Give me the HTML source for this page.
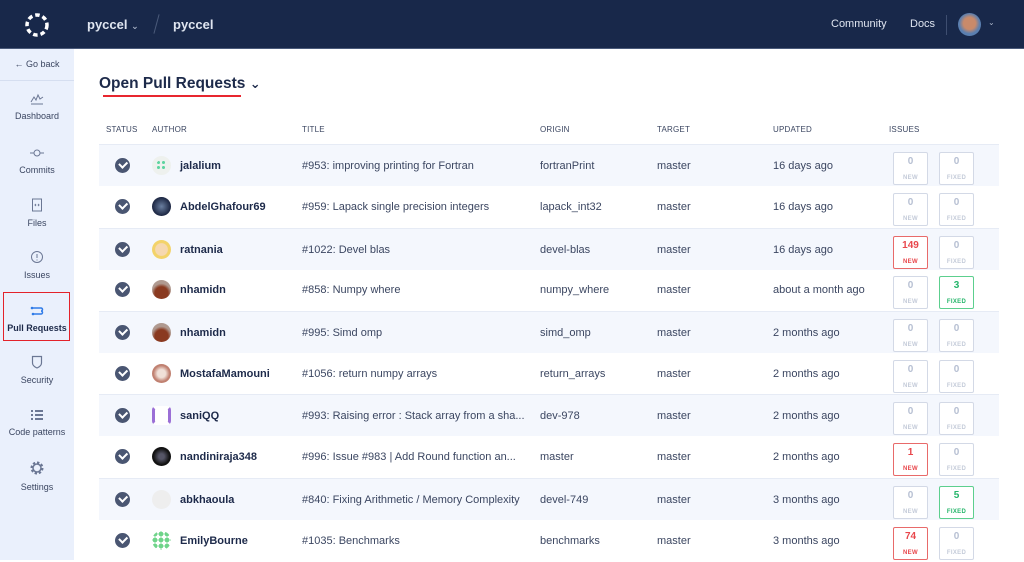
<!DOCTYPE html>
<html><head><meta charset="utf-8"><style>
*{box-sizing:border-box;margin:0;padding:0}
body{width:1024px;height:560px;overflow:hidden;background:#fff;font-family:"Liberation Sans","DejaVu Sans",sans-serif;color:#2b3550;position:relative}
.top{position:absolute;left:0;top:0;width:1024px;height:49px;background:#18284a;border-bottom:1px solid #4a5a7a;color:#dfe5f0}
.top .t{position:absolute;top:17px;font-size:13px;font-weight:bold}
.side{position:absolute;left:0;top:49px;width:74px;height:511px;background:#eaf0fc}
.side .it{position:absolute;left:0;width:74px;text-align:center;font-size:9px;color:#3b4661}
.side svg{display:block;margin:0 auto 6px}
h1{position:absolute;left:99px;top:75px;font-size:15.5px;font-weight:bold;color:#1d2a4a}
.ul{position:absolute;left:103px;top:95px;width:138px;height:2px;background:#e8262f}
.hd{position:absolute;top:125px;font-size:8px;color:#3b4661;letter-spacing:.2px}
.row{position:absolute;left:99px;width:900px;height:42px;font-size:11px;color:#3b4661}
.row.a{background:#f4f7fd;border-top:1px solid #e6ebf5}
.row>*{position:absolute}
.chk{left:16px;top:13px;width:15px;height:15px;border-radius:50%;background:#4a5672}
.chk:after{content:"";position:absolute;left:4px;top:3px;width:6px;height:3.5px;border-left:2px solid #fff;border-bottom:2px solid #fff;transform:rotate(-45deg)}
.av{left:53px;top:11px;width:19px;height:19px;border-radius:50%}
.nm{left:81px;top:15px;font-weight:bold;color:#1d2a4a}
.c{top:15px}
.bx{top:7px;width:35px;height:33px;border:1px solid #d3d9e6;border-radius:2px;text-align:center;background:#fff}
.bx b{display:block;font-size:10px;margin-top:3px;color:#b6bfd2}
.bx i{display:block;font-style:normal;font-size:6px;font-weight:bold;margin-top:8px;color:#c4cbd9;letter-spacing:.3px}
.bx.r{border-color:#e86a6a}.bx.r b,.bx.r i{color:#e8474c}
.bx.g{border-color:#5ccf8e}.bx.g b,.bx.g i{color:#24b56a}
</style></head><body>
<div class="top">
<svg style="position:absolute;left:24px;top:12px" width="26" height="26" viewBox="0 0 26 26"><circle cx="13" cy="13" r="10" fill="none" stroke="#fff" stroke-width="3.5" stroke-dasharray="4.5 3"/></svg>
<span class="t" style="left:87px">pyccel <span style="font-size:9px;color:#aab4c8">&#8964;</span></span>
<span style="position:absolute;left:156px;top:14px;width:1px;height:20px;background:#4a5a7a;transform:rotate(15deg)"></span>
<span class="t" style="left:173px">pyccel</span>
<span class="t" style="left:831px;font-weight:normal;font-size:11px;top:18px">Community</span>
<span class="t" style="left:910px;font-weight:normal;font-size:11px;top:18px">Docs</span>
<span style="position:absolute;left:946px;top:15px;width:1px;height:20px;background:#3e4e70"></span>
<span style="position:absolute;left:958px;top:13px;width:23px;height:23px;border-radius:50%;background:radial-gradient(circle at 50% 45%,#c98a6a 35%,#5a7fb0 60%)"></span>
<span style="position:absolute;left:988px;top:18px;font-size:8px;color:#aab4c8">&#8964;</span>
</div>
<div class="side">
<div class="it" style="top:10px">&#8592; Go back</div>
<div style="position:absolute;left:0;top:31px;width:74px;height:1px;background:#d5def0"></div>
<div class="it" style="top:44px"><svg width="14" height="12" viewBox="0 0 14 12"><path d="M1 9L4 4 6 7 8 2 10 6 13 4M1 11H13" fill="none" stroke="#6b7794" stroke-width="1"/></svg>Dashboard</div>
<div class="it" style="top:98px"><svg width="16" height="12" viewBox="0 0 16 12"><circle cx="8" cy="6" r="3" fill="none" stroke="#6b7794"/><path d="M1 6H5M11 6H15" stroke="#6b7794"/></svg>Commits</div>
<div class="it" style="top:149px"><svg width="12" height="14" viewBox="0 0 12 14"><rect x="1.5" y="1" width="9" height="12" fill="none" stroke="#6b7794"/><path d="M5 6L4 7 5 8M7 6L8 7 7 8" stroke="#6b7794" fill="none"/></svg>Files</div>
<div class="it" style="top:201px"><svg width="14" height="14" viewBox="0 0 14 14"><circle cx="7" cy="7" r="5.5" fill="none" stroke="#6b7794"/><path d="M7 4V8M7 9.5V10.5" stroke="#6b7794"/></svg>Issues</div>
<div style="position:absolute;left:3px;top:243px;width:67px;height:49px;border:1.5px solid #e3222a"></div>
<div class="it" style="top:256px;font-weight:bold;color:#1d2a4a"><svg width="14" height="12" viewBox="0 0 14 12"><path d="M2 3H11A1.5 1.5 0 0 1 11 6M3 9H11A1.5 1.5 0 0 0 11 6" fill="none" stroke="#2f7be8" stroke-width="1.5"/><circle cx="2" cy="3" r="1.3" fill="#2f7be8"/><circle cx="3" cy="9" r="1.3" fill="#2f7be8"/></svg>Pull Requests</div>
<div class="it" style="top:306px"><svg width="12" height="14" viewBox="0 0 12 14"><path d="M1.5 1.5H10.5V8Q10.5 11 6 13Q1.5 11 1.5 8Z" fill="none" stroke="#6b7794" stroke-width="1.2"/></svg>Security</div>
<div class="it" style="top:360px"><svg width="14" height="12" viewBox="0 0 14 12"><path d="M1 2H3M5 2H13M1 6H3M5 6H13M1 10H3M5 10H13" stroke="#6b7794" stroke-width="2"/></svg>Code patterns</div>
<div class="it" style="top:411px"><svg width="16" height="16" viewBox="0 0 16 16"><circle cx="8" cy="8" r="5" fill="none" stroke="#6b7794" stroke-width="3" stroke-dasharray="2.2 1.7"/><circle cx="8" cy="8" r="4" fill="none" stroke="#6b7794" stroke-width="1.5"/></svg>Settings</div>
</div>
<h1>Open Pull Requests <span style="font-size:13px">&#8964;</span></h1>
<div class="ul"></div>
<div class="hd" style="left:106px">STATUS</div><div class="hd" style="left:152px">AUTHOR</div><div class="hd" style="left:302px">TITLE</div><div class="hd" style="left:540px">ORIGIN</div><div class="hd" style="left:657px">TARGET</div><div class="hd" style="left:773px">UPDATED</div><div class="hd" style="left:889px">ISSUES</div>

<div class="row a" style="top:144px"><span class="chk"></span><span class="av" style="background:#eef1ee;border:4px solid #eef1ee;background-image:radial-gradient(circle,#5ed4a0 40%,transparent 45%);background-size:5px 5px"></span><span class="nm">jalalium</span><span class="c" style="left:203px">#953: improving printing for Fortran</span><span class="c" style="left:441px">fortranPrint</span><span class="c" style="left:558px">master</span><span class="c" style="left:674px">16 days ago</span><span class="bx" style="left:794px"><b>0</b><i>NEW</i></span><span class="bx" style="left:840px"><b>0</b><i>FIXED</i></span></div>
<div class="row" style="top:186px"><span class="chk"></span><span class="av" style="background:radial-gradient(circle,#6a7fa0,#1a2440 70%)"></span><span class="nm">AbdelGhafour69</span><span class="c" style="left:203px">#959: Lapack single precision integers</span><span class="c" style="left:441px">lapack_int32</span><span class="c" style="left:558px">master</span><span class="c" style="left:674px">16 days ago</span><span class="bx" style="left:794px"><b>0</b><i>NEW</i></span><span class="bx" style="left:840px"><b>0</b><i>FIXED</i></span></div>
<div class="row a" style="top:228px"><span class="chk"></span><span class="av" style="background:radial-gradient(circle,#f6d8b0 45%,#f3d36a 50%)"></span><span class="nm">ratnania</span><span class="c" style="left:203px">#1022: Devel blas</span><span class="c" style="left:441px">devel-blas</span><span class="c" style="left:558px">master</span><span class="c" style="left:674px">16 days ago</span><span class="bx r" style="left:794px"><b>149</b><i>NEW</i></span><span class="bx" style="left:840px"><b>0</b><i>FIXED</i></span></div>
<div class="row" style="top:269px"><span class="chk"></span><span class="av" style="background:radial-gradient(circle at 50% 70%,#8a3a20 40%,#b09a90 60%)"></span><span class="nm">nhamidn</span><span class="c" style="left:203px">#858: Numpy where</span><span class="c" style="left:441px">numpy_where</span><span class="c" style="left:558px">master</span><span class="c" style="left:674px">about a month ago</span><span class="bx" style="left:794px"><b>0</b><i>NEW</i></span><span class="bx g" style="left:840px"><b>3</b><i>FIXED</i></span></div>
<div class="row a" style="top:311px"><span class="chk"></span><span class="av" style="background:radial-gradient(circle at 50% 70%,#8a3a20 40%,#b09a90 60%)"></span><span class="nm">nhamidn</span><span class="c" style="left:203px">#995: Simd omp</span><span class="c" style="left:441px">simd_omp</span><span class="c" style="left:558px">master</span><span class="c" style="left:674px">2 months ago</span><span class="bx" style="left:794px"><b>0</b><i>NEW</i></span><span class="bx" style="left:840px"><b>0</b><i>FIXED</i></span></div>
<div class="row" style="top:353px"><span class="chk"></span><span class="av" style="background:radial-gradient(circle,#f0e0d8 30%,#c08070 60%)"></span><span class="nm">MostafaMamouni</span><span class="c" style="left:203px">#1056: return numpy arrays</span><span class="c" style="left:441px">return_arrays</span><span class="c" style="left:558px">master</span><span class="c" style="left:674px">2 months ago</span><span class="bx" style="left:794px"><b>0</b><i>NEW</i></span><span class="bx" style="left:840px"><b>0</b><i>FIXED</i></span></div>
<div class="row a" style="top:394px"><span class="chk"></span><span class="av" style="background:#fff;border:3px solid #9b6fd6;border-top-color:transparent;border-bottom-color:transparent;border-radius:4px"></span><span class="nm">saniQQ</span><span class="c" style="left:203px">#993: Raising error : Stack array from a sha...</span><span class="c" style="left:441px">dev-978</span><span class="c" style="left:558px">master</span><span class="c" style="left:674px">2 months ago</span><span class="bx" style="left:794px"><b>0</b><i>NEW</i></span><span class="bx" style="left:840px"><b>0</b><i>FIXED</i></span></div>
<div class="row" style="top:436px"><span class="chk"></span><span class="av" style="background:radial-gradient(circle,#556 20%,#111 60%)"></span><span class="nm">nandiniraja348</span><span class="c" style="left:203px">#996: Issue #983 | Add Round function an...</span><span class="c" style="left:441px">master</span><span class="c" style="left:558px">master</span><span class="c" style="left:674px">2 months ago</span><span class="bx r" style="left:794px"><b>1</b><i>NEW</i></span><span class="bx" style="left:840px"><b>0</b><i>FIXED</i></span></div>
<div class="row a" style="top:478px"><span class="chk"></span><span class="av" style="background:#eee"></span><span class="nm">abkhaoula</span><span class="c" style="left:203px">#840: Fixing Arithmetic / Memory Complexity</span><span class="c" style="left:441px">devel-749</span><span class="c" style="left:558px">master</span><span class="c" style="left:674px">3 months ago</span><span class="bx" style="left:794px"><b>0</b><i>NEW</i></span><span class="bx g" style="left:840px"><b>5</b><i>FIXED</i></span></div>
<div class="row" style="top:520px"><span class="chk"></span><span class="av" style="background:#fff;background-image:radial-gradient(circle,#6fd48a 55%,transparent 60%);background-size:6px 6px"></span><span class="nm">EmilyBourne</span><span class="c" style="left:203px">#1035: Benchmarks</span><span class="c" style="left:441px">benchmarks</span><span class="c" style="left:558px">master</span><span class="c" style="left:674px">3 months ago</span><span class="bx r" style="left:794px"><b>74</b><i>NEW</i></span><span class="bx" style="left:840px"><b>0</b><i>FIXED</i></span></div>
</body></html>
